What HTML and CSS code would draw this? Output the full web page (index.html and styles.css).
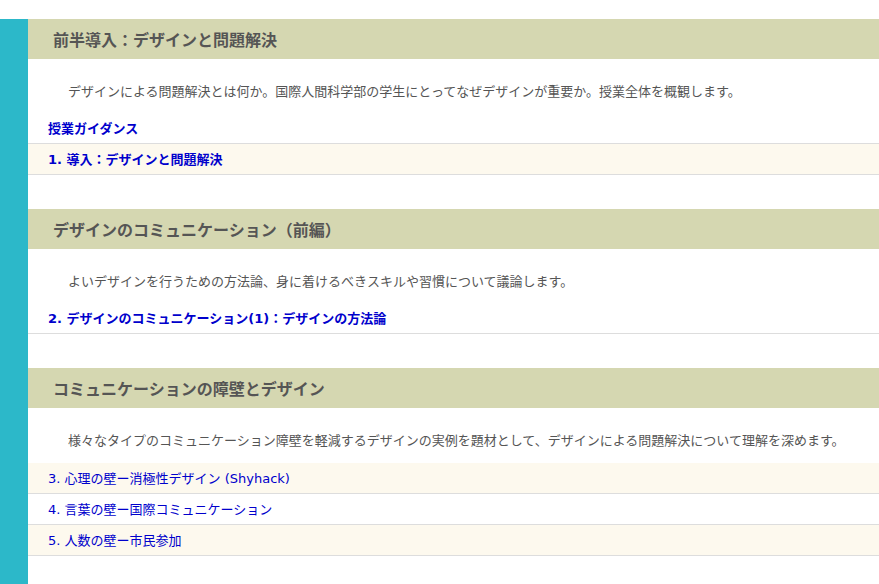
FILE: index.html
```html
<!DOCTYPE html>
<html lang="ja">
<head>
    <meta charset="UTF-8">
    <title>授業計画</title>
    <meta name="viewport" content="width=device-width, initial-scale=1.0">
    <link rel="stylesheet" href="styles.css">
</head>
<body>
    <div class="page">
        <div class="sidebar"></div>

        <div class="content">

            <div class="unit">
                <h2 class="unit-title">前半導入：デザインと問題解決</h2>
                <p class="unit-desc">デザインによる問題解決とは何か。国際人間科学部の学生にとってなぜデザインが重要か。授業全体を概観します。</p>
                <ul class="lessons">
                    <li class="lesson"><a href="#">授業ガイダンス</a></li>
                    <li class="lesson alt"><a href="#">1. 導入：デザインと問題解決</a></li>
                </ul>
            </div>

            <div class="unit">
                <h2 class="unit-title">デザインのコミュニケーション（前編）</h2>
                <p class="unit-desc">よいデザインを行うための方法論、身に着けるべきスキルや習慣について議論します。</p>
                <ul class="lessons">
                    <li class="lesson"><a href="#">2. デザインのコミュニケーション(1)：デザインの方法論</a></li>
                </ul>
            </div>

            <div class="unit">
                <h2 class="unit-title">コミュニケーションの障壁とデザイン</h2>
                <p class="unit-desc">様々なタイプのコミュニケーション障壁を軽減するデザインの実例を題材として、デザインによる問題解決について理解を深めます。</p>
                <ul class="lessons plain">
                    <li class="lesson alt"><a href="#">3. 心理の壁ー消極性デザイン (Shyhack)</a></li>
                    <li class="lesson"><a href="#">4. 言葉の壁ー国際コミュニケーション</a></li>
                    <li class="lesson alt"><a href="#">5. 人数の壁ー市民参加</a></li>
                </ul>
            </div>

        </div>
    </div>
</body>
</html>
```

FILE: styles.css
```css
body {
    font-family: "Noto Sans CJK JP", "Noto Sans", sans-serif;
    margin: 0;
    padding: 19px 0 0;
    background-color: #fff;
    color: #555;
}

.page {
    display: flex;
    min-height: 565px;
}

.sidebar {
    width: 28px;
    flex-shrink: 0;
    background-color: #2cb8c9;
}

.content {
    flex: 1;
    padding-bottom: 28px;
}

.unit {
    margin-bottom: 34px;
}

.unit:last-child {
    margin-bottom: 0;
}

.unit:last-child .unit-desc {
    margin-bottom: 14px;
}

.unit-title {
    margin: 0;
    height: 40px;
    line-height: 40px;
    padding-left: 25px;
    background-color: #d5d7b1;
    color: #555;
    font-size: 16px;
    font-weight: bold;
}

.unit-desc {
    margin: 22px 0 13px;
    padding-left: 40px;
    font-size: 13px;
    line-height: 19px;
    color: #555;
}

.lessons {
    list-style: none;
    margin: 0;
    padding: 0;
    font-family: "DejaVu Sans", "Noto Sans CJK JP", sans-serif;
}

.lesson {
    height: 30px;
    line-height: 31px;
    padding-left: 20px;
    border-bottom: 1px solid #ddd;
    font-size: 13px;
    font-weight: bold;
}

.lesson.alt {
    background-color: #fdf9ee;
}

.plain .lesson {
    font-weight: normal;
}

.lesson a {
    color: #0000cc;
    text-decoration: none;
}
```
